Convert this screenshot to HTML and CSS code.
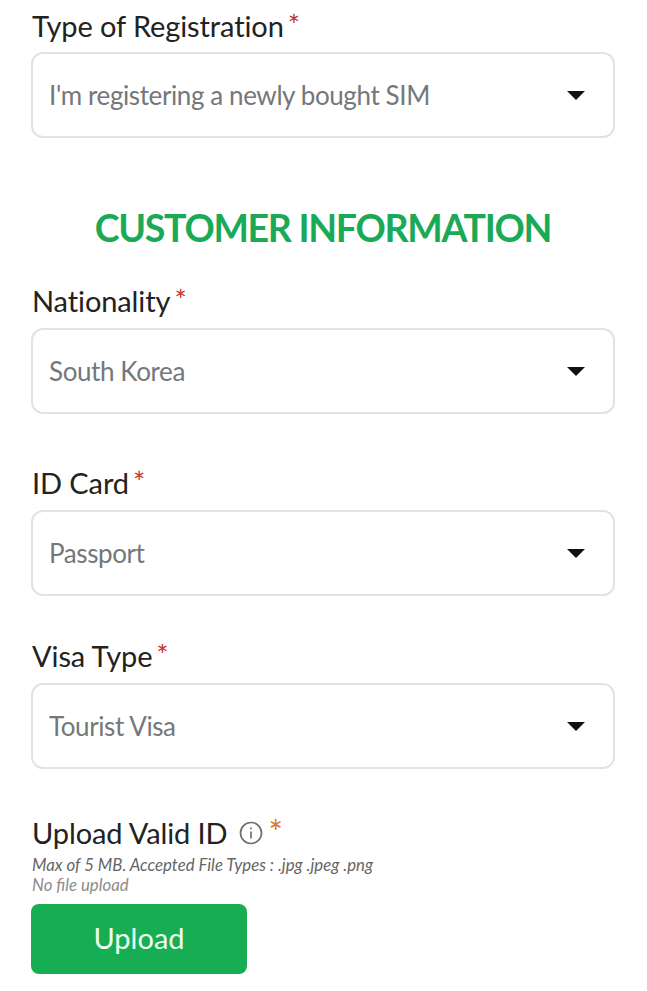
FILE: index.html
```html
<!DOCTYPE html>
<html>

<head>
	<meta charset="utf-8">
	<link rel="stylesheet" href="styles.css">
</head>

<body>
	<div class="form">
		<div class="field first">
			<div class="label">Type of Registration<span class="req">*</span></div>
			<div class="select"><span>I'm registering a newly bought SIM</span><i class="caret"></i></div>
		</div>
		<h2 class="heading">CUSTOMER INFORMATION</h2>
		<div class="field wide">
			<div class="label">Nationality<span class="req">*</span></div>
			<div class="select"><span>South Korea</span><i class="caret"></i></div>
		</div>
		<div class="field">
			<div class="label">ID Card<span class="req">*</span></div>
			<div class="select"><span>Passport</span><i class="caret"></i></div>
		</div>
		<div class="field">
			<div class="label">Visa Type<span class="req">*</span></div>
			<div class="select"><span>Tourist Visa</span><i class="caret"></i></div>
		</div>
		<div class="upload">
			<div class="label">Upload Valid ID
				<svg class="info" width="24" height="24" viewBox="0 0 24 24" fill="none" stroke="#6f6f6f" stroke-width="1.7">
					<circle cx="12" cy="12" r="10.5"></circle>
					<path d="M12 10.5v7"></path>
					<path d="M12 6.4v1.8"></path>
				</svg>
				<span class="req orange">*</span>
			</div>
			<div class="hint">Max of 5 MB. Accepted File Types : .jpg .jpeg .png</div>
			<div class="hint light">No file upload</div>
			<div class="btn">Upload</div>
		</div>
	</div>
</body>

</html>
```

FILE: styles.css
```css
body {
	margin: 0;
	background: #fff;
	font-family: "Lato", "Liberation Sans", sans-serif;
	color: #222;
}
.form {
	padding: 7px 32px 0 31px;
	height: 984px;
	overflow: hidden;
}
.field {
	margin-bottom: 41px;
}
.wide {
	margin-bottom: 50px;
}
.first {
	margin-bottom: 0;
}
.first .select {
	margin-top: 8px;
}
.label {
	font-size: 29px;
	line-height: 37px;
	letter-spacing: -0.1px;
	display: flex;
	align-items: center;
	padding-left: 1px;
}
.req {
	color: #c0392b;
	font-size: 29px;
	line-height: 30px;
	margin: 3px 0 0 4px;
	align-self: flex-start;
}
.orange {
	color: #d9772b;
	font-size: 34px;
	margin: 3px 0 0 6px;
}
.select {
	margin-top: 9px;
	height: 82px;
	border: 2px solid #e2e2e2;
	border-radius: 12px;
	padding: 0 28px 0 16px;
	display: flex;
	align-items: center;
	justify-content: space-between;
	font-size: 26px;
	letter-spacing: -0.4px;
	color: #74777b;
}
.caret {
	width: 0;
	height: 0;
	border-left: 9px solid transparent;
	border-right: 9px solid transparent;
	border-top: 9px solid #111;
}
.heading {
	margin: 68px 0 32px;
	text-align: center;
	font-size: 37.5px;
	line-height: 44px;
	font-weight: 700;
	color: #1aa957;
	letter-spacing: -1.3px;
}
.upload {
	margin-top: 45px;
}
.info {
	margin-left: 11px;
}
.hint {
	font-size: 16.8px;
	line-height: 20px;
	font-style: italic;
	color: #666;
	padding-left: 1px;
}
.upload .label + .hint {
	margin-top: 4px;
}
.light {
	color: #8c8c8c;
}
.btn {
	margin-top: 9px;
	width: 216px;
	height: 70px;
	padding-bottom: 3px;
	box-sizing: border-box;
	background: #17ad52;
	border-radius: 8px;
	color: #eafff2;
	font-size: 29px;
	display: flex;
	align-items: center;
	justify-content: center;
}
```
